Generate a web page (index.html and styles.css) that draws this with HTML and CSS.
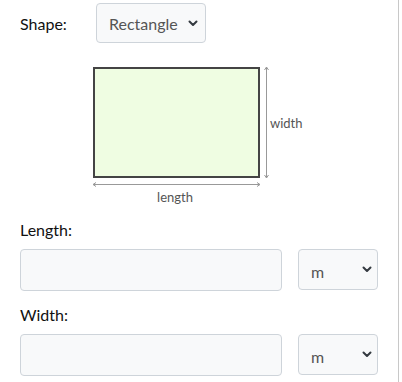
FILE: index.html
```html
<!DOCTYPE html>
<html>
<head>
<meta charset="utf-8">
<link rel="stylesheet" href="styles.css">
</head>
<body>
<div class="page">
  <div class="shape-row">
    <label class="shape-label">Shape:</label>
    <div class="select-wrap shape-select">
      <select class="form-select"><option>Rectangle</option></select>
      <svg class="chev" width="10" height="7" viewBox="0 0 10 7"><path d="M1.5 1.5 L5 5 L8.5 1.5" fill="none" stroke="#343a40" stroke-width="2" stroke-linecap="round" stroke-linejoin="round"/></svg>
    </div>
  </div>
  <div class="diagram">
    <svg width="240" height="150" viewBox="0 0 240 150">
      <rect x="14" y="8" width="165" height="109" fill="#effde2" stroke="#444" stroke-width="2"/>
      <g stroke="#999" stroke-width="1" fill="none">
        <line x1="186.5" y1="7" x2="186.5" y2="118"/>
        <path d="M184.5 10 L186.5 7 L188.5 10"/>
        <path d="M184.5 115 L186.5 118 L188.5 115"/>
        <line x1="13" y1="124.5" x2="180" y2="124.5"/>
        <path d="M16 122.5 L13 124.5 L16 126.5"/>
        <path d="M177 122.5 L180 124.5 L177 126.5"/>
      </g>
      <text x="190" y="68" class="dim">width</text>
      <text x="95" y="142" class="dim" text-anchor="middle">length</text>
    </svg>
  </div>
  <div class="field">
    <label class="field-label">Length:</label>
    <div class="field-row">
      <input class="form-input" type="text">
      <div class="select-wrap unit-select">
        <select class="form-select unit"><option>m</option></select>
        <svg class="chev" width="10" height="7" viewBox="0 0 10 7"><path d="M1.5 1.5 L5 5 L8.5 1.5" fill="none" stroke="#343a40" stroke-width="2" stroke-linecap="round" stroke-linejoin="round"/></svg>
      </div>
    </div>
  </div>
  <div class="field">
    <label class="field-label">Width:</label>
    <div class="field-row">
      <input class="form-input" type="text">
      <div class="select-wrap unit-select">
        <select class="form-select unit"><option>m</option></select>
        <svg class="chev" width="10" height="7" viewBox="0 0 10 7"><path d="M1.5 1.5 L5 5 L8.5 1.5" fill="none" stroke="#343a40" stroke-width="2" stroke-linecap="round" stroke-linejoin="round"/></svg>
      </div>
    </div>
  </div>
</div>
</body>
</html>
```
FILE: styles.css
```css
html, body {
  margin: 0;
  padding: 0;
  background: #fff;
}
body {
  font-family: "Lato", "Noto Sans", sans-serif;
  color: #111;
  font-size: 16px;
}
.page {
  width: 399px;
  height: 382px;
  box-sizing: border-box;
  border-right: 1px solid #c8c8c8;
  padding: 3px 0 0 20px;
}
.shape-row {
  display: flex;
  align-items: center;
  height: 40px;
}
.shape-label {
  width: 76px;
}
.select-wrap {
  position: relative;
}
.form-select {
  -webkit-appearance: none;
  appearance: none;
  display: block;
  box-sizing: border-box;
  background: #f8f9fa;
  border: 1px solid #ced4da;
  border-radius: 4px;
  color: #555;
  font-family: "Lato", "Noto Sans", sans-serif;
  font-size: 16px;
  outline: none;
}
.shape-select .form-select {
  width: 110px;
  height: 40px;
  padding: 0 20px 0 12px;
}
.chev {
  position: absolute;
  right: 8px;
  top: 17px;
  pointer-events: none;
}
.diagram {
  margin: 17px 0 0 60px;
  height: 150px;
}
.diagram svg {
  display: block;
}
.dim {
  font-family: "Lato", "Noto Sans", sans-serif;
  font-size: 13px;
  fill: #555;
}
.field {
  display: flex;
  flex-direction: column;
}
.field-label {
  display: block;
  height: 20px;
  line-height: 20px;
  margin-top: 10px;
  margin-bottom: 9px;
}
.field + .field .field-label {
  margin-top: 14px;
}
.field-row {
  display: flex;
  gap: 16px;
  align-items: flex-start;
}
.form-input {
  box-sizing: border-box;
  width: 262px;
  height: 42px;
  background: #f8f9fa;
  border: 1px solid #ced4da;
  border-radius: 4px;
  margin: 0;
  outline: none;
}
.unit-select .form-select {
  width: 80px;
  height: 41px;
  padding: 3px 20px 0 12px;
}
.unit-select .chev {
  top: 17px;
  right: 6px;
}
```
